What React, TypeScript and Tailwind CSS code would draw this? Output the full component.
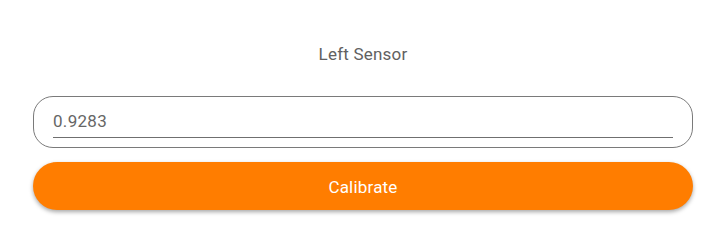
export default function App() {
  return (
    <div className="min-h-[233px] w-[720px] bg-white pt-[44px] font-['Roboto',sans-serif]">
      <div className="ml-[33px] w-[660px]">
        <div className="text-center text-[17px] leading-[20px] tracking-[0.2px] text-[#616161]">Left Sensor</div>

        <div className="mt-[32px] rounded-[20px] border border-[#7a7a7a] px-[19px] pt-[11px] pb-[9px]">
          <input
            defaultValue="0.9283"
            className="block h-[30px] w-full border-b border-[#6f6f6f] bg-transparent pb-[3px] text-[17px] leading-[26px] tracking-[0.3px] text-[#666] outline-none"
          />
        </div>

        <button
          type="button"
          className="mt-[14px] block h-[48px] w-full rounded-full bg-[#ff7d00] pt-[3px] text-[17px] tracking-[0.2px] text-white shadow-[0_2px_4px_rgba(0,0,0,0.35)]"
        >
          Calibrate
        </button>
      </div>
    </div>
  );
}
